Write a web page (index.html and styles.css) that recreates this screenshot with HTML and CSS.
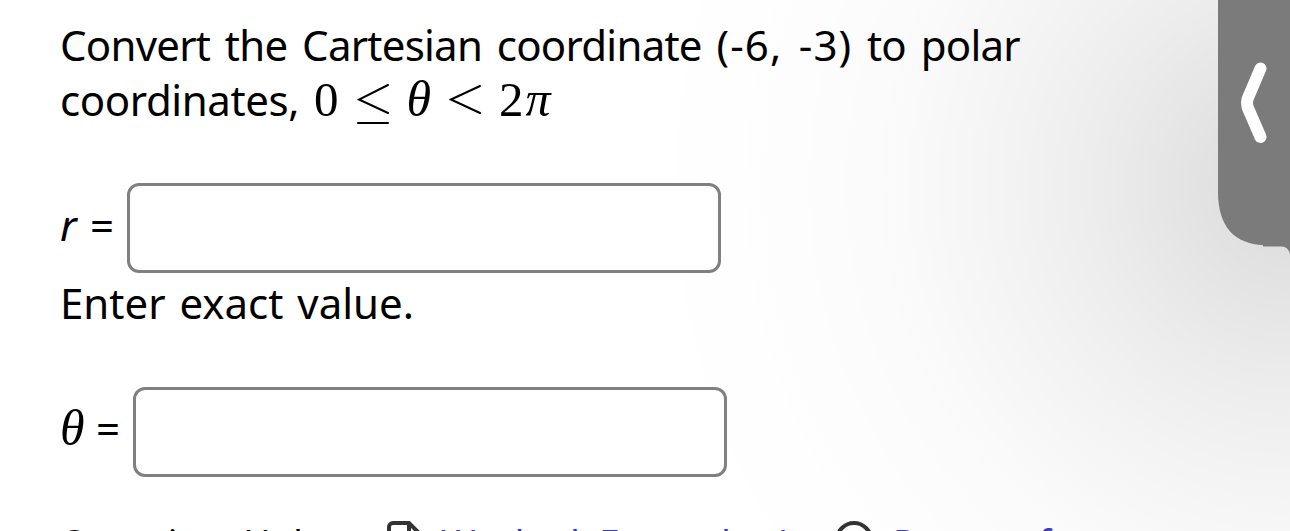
FILE: index.html
```
<!DOCTYPE html>
<html lang="en">
<head>
    <meta charset="UTF-8">
    <meta name="viewport" content="width=device-width, initial-scale=1.0">
    <title>Polar Coordinates</title>
    <link rel="stylesheet" href="styles.css">
</head>
<body>

    <div class="question">
        <p class="prompt">
            <span class="line first">Convert the Cartesian coordinate <span class="point">(-6, -3)</span> to polar</span>
            <span class="line second"><span class="word">coordinates,</span>
                <span class="math"><span class="zero">0</span><svg class="leq" width="32" height="42" viewBox="0 0 32 42"><path d="M31 2 L2 16.5 L31 30 M1 40H31"/></svg><i class="theta">θ</i><svg class="less" width="32" height="42" viewBox="0 0 32 42"><path d="M31 5 L2 18.5 L31 32"/></svg><span class="two">2</span><i class="pi">π</i></span>
            </span>
        </p>

        <div class="answer">
            <label for="r"><i class="var-r">r</i> <span class="eq">=</span></label>
            <input type="text" id="r">
        </div>
        <p class="note">Enter exact value.</p>

        <div class="answer second-answer">
            <label for="theta"><i class="theta">θ</i> <span class="eq">=</span></label>
            <input type="text" id="theta">
        </div>

        <div class="help">
            <span class="help-title">Question Help:</span>
            <svg class="doc-icon" width="34" height="42" viewBox="0 0 34 42"><path d="M22 2H6a4 4 0 0 0-4 4v30a4 4 0 0 0 4 4h22a4 4 0 0 0 4-4V12zM22 2v10h10"/></svg>
            <a class="example">Worked Example 1</a>
            <svg class="forum-icon" width="38" height="38" viewBox="0 0 38 38"><circle cx="19" cy="19" r="17"/></svg>
            <a class="forum">Post to forum</a>
        </div>
    </div>

    <svg class="side-tab" width="72" height="256" viewBox="0 0 72 256">
        <path class="tab" d="M0 0H72V254Q70 246.500 64 246.500H45V245C18 244 0 228 0 192z"/>
        <path class="chevron" d="M42.500 68.500L29.500 99Q28.500 103 29.500 107L42.500 137"/>
    </svg>

</body>
</html>
```
FILE: styles.css
```
html {
    overflow: hidden;
}

body {
    margin: 0;
    height: 531px;
    overflow: hidden;
    position: relative;
    font-family: "Trebuchet MS", "Noto Sans", sans-serif;
    font-size: 42px;
    color: black;
    background-color: white;
    /* soft shadow spreading out from the side tab */
    background-image: radial-gradient(ellipse 640px 660px at 1290px 185px,
        rgba(0, 0, 0, 0.15) 0%,
        rgba(0, 0, 0, 0.116) 12%,
        rgba(0, 0, 0, 0.075) 30%,
        rgba(0, 0, 0, 0.046) 44%,
        rgba(0, 0, 0, 0.021) 61%,
        rgba(0, 0, 0, 0.009) 78%,
        rgba(0, 0, 0, 0.004) 92%,
        rgba(0, 0, 0, 0) 100%);
}

.question {
    padding: 17px 0 0 60px;
}

.prompt, .note {
    margin: 0;
}

.line {
    display: block;
    height: 55px;
    line-height: 55px;
    white-space: nowrap;
}

.first {
    letter-spacing: -0.75px;
    word-spacing: 4.5px;
}

.point {
    letter-spacing: 1.1px;
}

.second {
    display: flex;
    align-items: center;
}

.word {
    width: 254px;
    letter-spacing: -0.4px;
}

.math {
    display: flex;
    align-items: center;
    font-family: "Liberation Serif", serif;
    font-size: 49px;
}

.math svg {
    fill: none;
    stroke: black;
    stroke-width: 2;
    stroke-linecap: round;
}

.leq {
    margin: 9px 18px 0 18px;
}

.less {
    margin: 5px 18px 0 18px;
}

.pi {
    padding-left: 2px;
    font-size: 50px;
}

.theta {
    font-family: "Liberation Serif", serif;
    font-size: 50px;
}

.answer {
    display: flex;
    align-items: center;
    height: 90px;
    margin-top: 56px;
}

.answer label {
    display: flex;
    align-items: center;
    width: 67px;
    padding-bottom: 7px;
}

.second-answer {
    margin-top: 55px;
}

.second-answer label {
    width: 73px;
    padding-bottom: 9px;
}

.var-r {
    width: 30px;
}

.second-answer .theta {
    width: 36px;
}

.answer input {
    box-sizing: border-box;
    width: 594px;
    height: 90px;
    padding: 0 12px;
    border: 3px solid #808080;
    border-radius: 12px;
    background-color: white;
    font: inherit;
}

.note {
    height: 59px;
    line-height: 59px;
    word-spacing: 3px;
}

.help {
    display: flex;
    align-items: flex-start;
    margin-top: 44px;
    font-size: 37px;
    line-height: 42px;
    letter-spacing: 0.8px;
    white-space: nowrap;
}

.help-title {
    width: 327px;
    word-spacing: 8px;
}

.help svg {
    flex: none;
    fill: none;
    stroke: #333;
    stroke-width: 4;
}

.help a {
    color: #3c37b5;
    margin-left: 20px;
}

.example {
    width: 394px;
    word-spacing: 8px;
}

.forum {
    word-spacing: 4px;
}

.side-tab {
    position: absolute;
    top: 0;
    right: 0;
}

.tab {
    fill: #7b7b7b;
}

.chevron {
    fill: none;
    stroke: white;
    stroke-width: 12;
    stroke-linecap: round;
    stroke-linejoin: round;
}
```
